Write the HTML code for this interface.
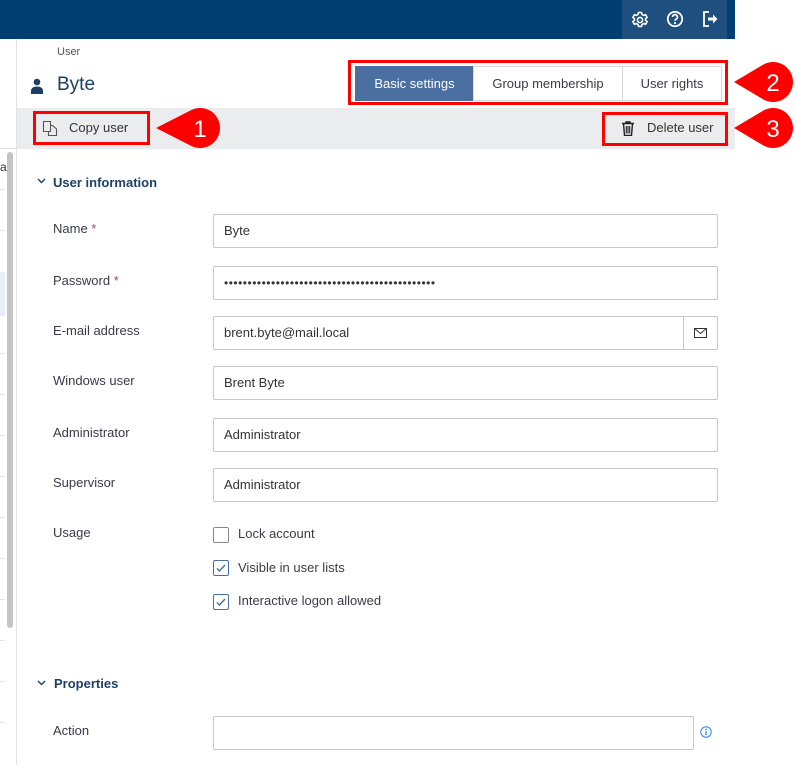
<!DOCTYPE html>
<html><head><meta charset="utf-8">
<style>
*{box-sizing:border-box;margin:0;padding:0}
body{width:797px;height:765px;position:relative;overflow:hidden;background:#fff;font-family:"Liberation Sans",sans-serif;color:#3a3a4a;font-size:13px}
.abs{position:absolute}
.hdr{left:0;top:0;width:735px;height:39px;background:#023f71}
.icons{left:622px;top:0;width:105px;height:39px;background:#1e4f7e}
.lbl{position:absolute;left:53px;font-size:13px;color:#3a3a4a}
.req{color:#b0406a}
.inp{position:absolute;left:213px;width:505px;height:34px;border:1px solid #c8c8c8;border-radius:2px;padding-left:10px;line-height:32px;font-size:13px;color:#333}
.tb{position:absolute;top:66px;height:35px;line-height:33px;text-align:center;font-size:13px;border:1px solid #d8d8d8;background:#fff;color:#3a3a4a}
.cb{position:absolute;left:213px;width:16px;height:16px;border:1px solid #888;border-radius:2px}
.cb.on{border-color:#4a6fa0}
.cbl{position:absolute;left:238px;font-size:13px;color:#3a3a4a}
.sec{position:absolute;font-weight:bold;color:#1d3f66;font-size:13px}
.red{position:absolute;border:3px solid #f00}
.ln{position:absolute;left:0;width:5px;height:1px;background:#e4e4e4}
</style></head><body>
<div class="abs hdr"></div>
<div class="abs icons"></div>
<svg class="abs" style="left:630px;top:10px" width="20" height="20" viewBox="0 0 20 20"><g fill="none" stroke="#fff" stroke-width="1.6"><circle cx="10" cy="10" r="2.6"/><path d="M8.5 2.5h3l.5 2 1.6.9 2-.7 1.5 2.6-1.5 1.4v1.6l1.5 1.4-1.5 2.6-2-.7-1.6.9-.5 2h-3l-.5-2-1.6-.9-2 .7-1.5-2.6 1.5-1.4V8.7L2.9 7.3l1.5-2.6 2 .7L8 4.5z"/></g></svg>
<svg class="abs" style="left:666px;top:10px" width="18" height="18" viewBox="0 0 18 18"><circle cx="9" cy="9" r="7.2" fill="none" stroke="#fff" stroke-width="1.8"/><path d="M6.6 7a2.4 2.4 0 1 1 3.4 2.2c-.7.4-1 .8-1 1.6" fill="none" stroke="#fff" stroke-width="1.8"/><circle cx="9" cy="13" r="1.1" fill="#fff"/></svg>
<svg class="abs" style="left:701px;top:10px" width="18" height="18" viewBox="0 0 18 18"><path d="M8 2H3v14h5" fill="none" stroke="#fff" stroke-width="1.8"/><path d="M7 7.5h5V4.5l4.5 4.5-4.5 4.5v-3H7z" fill="#fff"/></svg>

<div class="abs" style="left:16px;top:39px;width:1px;height:726px;background:#e2e2e2"></div>
<div class="abs" style="left:0;top:148px;width:16px;height:1px;background:#e2e2e2"></div>
<div class="abs" style="left:0;top:272px;width:5px;height:44px;background:#e6eef6"></div>
<div class="abs" style="left:0;top:160px;font-size:12px;color:#333">a</div>
<div class="abs" style="left:7px;top:152px;width:6px;height:476px;background:#c4c4c4;border-radius:3px"></div>
<div class="ln" style="top:189px"></div><div class="ln" style="top:230px"></div><div class="ln" style="top:353px"></div><div class="ln" style="top:394px"></div><div class="ln" style="top:435px"></div><div class="ln" style="top:476px"></div><div class="ln" style="top:517px"></div><div class="ln" style="top:558px"></div><div class="ln" style="top:599px"></div><div class="ln" style="top:640px"></div><div class="ln" style="top:681px"></div><div class="ln" style="top:722px"></div>

<div class="abs" style="left:57px;top:46px;font-size:11px;color:#555">User</div>
<svg class="abs" style="left:30px;top:78px" width="14" height="16" viewBox="0 0 14 16"><circle cx="7" cy="4" r="3.3" fill="#1d3f66"/><path d="M1 16v-3c0-3 2.5-4.5 6-4.5s6 1.5 6 4.5v3z" fill="#1d3f66"/></svg>
<div class="abs" style="left:57px;top:74px;font-size:19px;color:#1d3f66">Byte</div>

<div class="tb" style="left:355px;width:119px;background:#4a6fa0;border-color:#4a6fa0;color:#fff">Basic settings</div>
<div class="tb" style="left:473px;width:150px">Group membership</div>
<div class="tb" style="left:622px;width:100px">User rights</div>
<div class="red" style="left:348px;top:60px;width:380px;height:45px"></div>

<div class="abs" style="left:17px;top:108px;width:718px;height:41px;background:#ebecee"></div>
<svg class="abs" style="left:42px;top:120px" width="17" height="17" viewBox="0 0 17 17"><g fill="none" stroke="#555" stroke-width="1.1"><path d="M1.5 1.5h7v10h-7z"/><path d="M8.5 5.5h2l4 3.5v6.5h-8v-4"/></g></svg>
<div class="abs" style="left:69px;top:120px;font-size:13px;color:#333">Copy user</div>
<div class="red" style="left:33px;top:111px;width:117px;height:34px"></div>
<svg class="abs" style="left:621px;top:121px" width="14" height="15" viewBox="0 0 14 15"><path d="M1 2.5h12M5 2.5V1h4v1.5M2.5 2.5l1 12h7l1-12" fill="none" stroke="#222" stroke-width="1.4"/><path d="M5.3 5v7.5M7 5v7.5M8.7 5v7.5" stroke="#222" stroke-width="1.1"/></svg>
<div class="abs" style="left:647px;top:120px;font-size:13px;color:#333">Delete user</div>
<div class="red" style="left:602px;top:112px;width:126px;height:34px"></div>

<svg class="abs" style="left:0;top:0" width="797" height="765" viewBox="0 0 797 765">
<g fill="#f00">
<path d="M156 128 L190.9 110.2 A20 20 0 1 1 190.9 145.8 Z"/>
<path d="M734 82 L763.9 64.2 A20 20 0 1 1 763.9 99.8 Z"/>
<path d="M734 128 L763.9 110.2 A20 20 0 1 1 763.9 145.8 Z"/>
</g>
<g fill="#fff" font-family="Liberation Sans,sans-serif" font-size="24" text-anchor="middle">
<text x="200" y="137">1</text><text x="773" y="91">2</text><text x="773" y="137">3</text>
</g>
</svg>

<svg class="abs" style="left:37px;top:178px" width="9" height="6" viewBox="0 0 9 6"><path d="M1 1l3.5 3.5L8 1" fill="none" stroke="#1d3f66" stroke-width="1.4"/></svg>
<div class="sec" style="left:53px;top:175px">User information</div>

<div class="lbl" style="top:221px">Name <span class="req">*</span></div>
<div class="inp" style="top:214px">Byte</div>
<div class="lbl" style="top:273px">Password <span class="req">*</span></div>
<div class="inp" style="top:266px;font-size:12px;letter-spacing:0.5px">•••••••••••••••••••••••••••••••••••••••••••••</div>
<div class="lbl" style="top:323px">E-mail address</div>
<div class="inp" style="top:316px">brent.byte@mail.local</div>
<div class="abs" style="left:683px;top:317px;width:1px;height:32px;background:#c8c8c8"></div>
<svg class="abs" style="left:694px;top:328px" width="13" height="10" viewBox="0 0 13 10"><path d="M.5.5h12v9H.5zM.5.5l6 5 6-5" fill="none" stroke="#333" stroke-width="1"/></svg>
<div class="lbl" style="top:373px">Windows user</div>
<div class="inp" style="top:366px">Brent Byte</div>
<div class="lbl" style="top:425px">Administrator</div>
<div class="inp" style="top:418px">Administrator</div>
<div class="lbl" style="top:475px">Supervisor</div>
<div class="inp" style="top:468px">Administrator</div>

<div class="lbl" style="top:525px">Usage</div>
<div class="cb" style="top:527px"></div><div class="cbl" style="top:526px">Lock account</div>
<div class="cb on" style="top:560px"></div><div class="cbl" style="top:560px">Visible in user lists</div>
<div class="cb on" style="top:594px"></div><div class="cbl" style="top:593px">Interactive logon allowed</div>
<svg class="abs" style="left:215px;top:562px" width="12" height="12" viewBox="0 0 12 12"><path d="M2 6.5l2.5 2.5L10 3" fill="none" stroke="#4a6fa0" stroke-width="1.4"/></svg>
<svg class="abs" style="left:215px;top:596px" width="12" height="12" viewBox="0 0 12 12"><path d="M2 6.5l2.5 2.5L10 3" fill="none" stroke="#4a6fa0" stroke-width="1.4"/></svg>

<svg class="abs" style="left:37px;top:680px" width="9" height="6" viewBox="0 0 9 6"><path d="M1 1l3.5 3.5L8 1" fill="none" stroke="#1d3f66" stroke-width="1.4"/></svg>
<div class="sec" style="left:54px;top:676px">Properties</div>
<div class="lbl" style="top:723px">Action</div>
<div class="inp" style="top:716px;width:481px"></div>
<svg class="abs" style="left:700px;top:726px" width="12" height="12" viewBox="0 0 12 12"><circle cx="6" cy="6" r="5.2" fill="none" stroke="#3d8bff" stroke-width="1.1"/><circle cx="6" cy="3.5" r=".9" fill="#3d8bff"/><path d="M6 5.2v4" stroke="#3d8bff" stroke-width="1.4"/></svg>
</body></html>
